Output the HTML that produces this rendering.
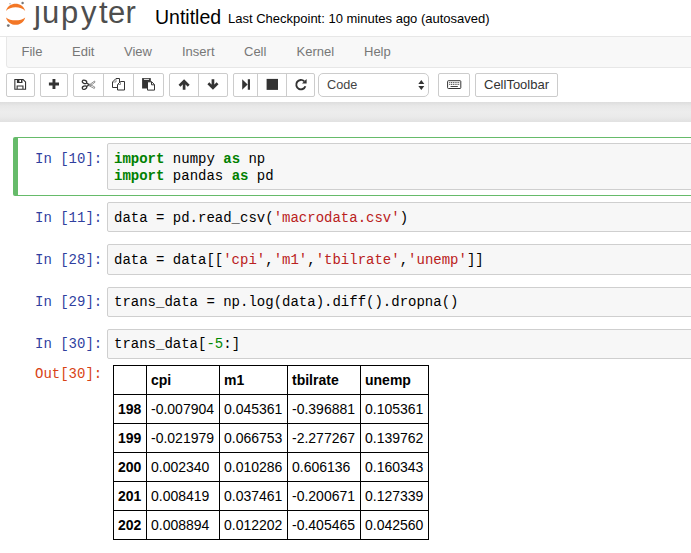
<!DOCTYPE html>
<html><head><meta charset="utf-8">
<style>
*{box-sizing:border-box}
html,body{margin:0;padding:0}
body{width:691px;height:553px;overflow:hidden;background:#fff;font-family:"Liberation Sans",sans-serif;position:relative;color:#000}
.abs{position:absolute}
svg{position:absolute;overflow:visible}
#logo{left:0;top:0}
#title{left:155px;top:6px;font-size:19.5px;line-height:22px;white-space:nowrap}
#chk{left:228px;top:11px;font-size:13px;line-height:16px;white-space:nowrap}
#menubar{left:6px;top:36px;width:700px;height:32px;background:#f8f8f8;border:1px solid #e7e7e7;border-radius:0 0 3px 3px}
#hline{left:0;top:36px;width:691px;height:1px;background:#e7e7e7}
.mi{position:absolute;top:44px;font-size:13px;line-height:16px;color:#777}
.btn{position:absolute;top:73px;height:24px;background:#fff;border:1px solid #ccc;border-radius:2px}
.sep{position:absolute;top:74px;height:22px;width:1px;background:#ccc}
.bt{position:absolute;font-size:13px;line-height:16px;top:77px;color:#333;white-space:nowrap}
#band{left:0;top:102px;width:691px;height:20px;background:linear-gradient(#dddddd 0%,#e8e8e8 20%,#ededed 50%,#eaeaea 75%,#e1e1e1 100%)}
.cellsel{left:13px;top:137px;width:700px;height:59px;border:1px solid #66bb6a;border-left:5px solid #66bb6a;border-radius:2px}
.inp{position:absolute;left:107px;width:600px;background:#f7f7f7;border:1px solid #cfcfcf;border-radius:2px}
.prompt{position:absolute;left:35px;font-family:"Liberation Mono",monospace;font-size:14px;line-height:17px;color:#303F9F;white-space:pre}
.code{position:absolute;left:114px;font-family:"Liberation Mono",monospace;font-size:14px;line-height:17px;white-space:pre;color:#000}
.k{color:#008000;font-weight:bold}
.s{color:#BA2121}
.n{color:#080}
table{position:absolute;left:113px;top:365px;border-collapse:collapse;font-size:14px;color:#000}
td,th{border:1px solid #000;padding:0 4px;height:29px;text-align:left;white-space:nowrap}
th{font-weight:bold}
</style></head><body>
<svg id="logo" width="140" height="34" viewBox="0 0 140 34">
<path d="M6,10.9 C8.5,1.4 22.7,1.4 25.2,10.9 C21,6.2 10.2,6.2 6,10.9Z" fill="#F37726"/>
<path d="M6,17.4 C8.5,27.2 22.7,27.2 25.2,17.4 C21,21.3 10.2,21.3 6,17.4Z" fill="#F37726"/>
<circle cx="22.6" cy="3" r="1.2" fill="#767677"/>
<circle cx="8.3" cy="25.6" r="1.4" fill="#767677"/>
<circle cx="10" cy="3.8" r="0.7" fill="#9e9e9e"/>
<text x="34.1 42 60.9 81.1 98.9 107.9 125.6" y="22.7" font-family="Liberation Sans, sans-serif" font-size="31" fill="#4e4e4e">jupyter</text>
<rect x="35" y="0" width="6" height="5" fill="#fff"/>
</svg>
<div id="title" class="abs">Untitled</div>
<div id="chk" class="abs">Last Checkpoint: 10 minutes ago (autosaved)</div>
<div id="menubar" class="abs"></div><div id="hline" class="abs"></div>
<div class="mi" style="left:21.5px">File</div>
<div class="mi" style="left:72px">Edit</div>
<div class="mi" style="left:124px">View</div>
<div class="mi" style="left:182px">Insert</div>
<div class="mi" style="left:244px">Cell</div>
<div class="mi" style="left:296.5px">Kernel</div>
<div class="mi" style="left:364px">Help</div>

<div class="btn" style="left:6px;width:29px"></div>
<div class="btn" style="left:40px;width:28px"></div>
<div class="btn" style="left:73px;width:91px"></div>
<div class="sep" style="left:103px"></div><div class="sep" style="left:133px"></div>
<div class="btn" style="left:169px;width:59px"></div>
<div class="sep" style="left:198px"></div>
<div class="btn" style="left:233px;width:82px"></div>
<div class="sep" style="left:257px"></div><div class="sep" style="left:286px"></div>
<div class="btn" style="left:318px;width:111px;border-radius:5px"></div>
<div class="bt" style="left:327px;font-size:12.7px;color:#444">Code</div>
<div class="btn" style="left:438px;width:32px"></div>
<div class="btn" style="left:475px;width:83px"></div>
<div class="bt" style="left:484px">CellToolbar</div>

<svg id="icons" width="691" height="110" viewBox="0 0 691 110" style="left:0;top:0">
<g fill="#333" stroke="none">
<!-- save -->
<path d="M14.3,79 h9 l2.8,2.8 v8 h-11.8z M15.4,80.1 v8.6 h1.2 v-3.3 h6.9 v3.3 h1.5 v-6.4 l-2.2,-2.2 h-0.3 v3 h-5.6 v-3z M17.7,86.5 v2.2 h4.7 v-2.2z M19.4,80.1 v2 h1.6 v-2z" fill-rule="evenodd"/>
<!-- plus -->
<path d="M52.5,79 h2.9 v3.6 h3.6 v2.9 h-3.6 v3.6 h-2.9 v-3.6 h-3.6 v-2.9 h3.6z"/>
<!-- arrows -->
<path d="M179.5,85.7 L184.1,81.1 L188.7,85.7 M184.1,81.5 V89.8" fill="none" stroke="#333" stroke-width="2.7" stroke-linejoin="miter"/>
<path d="M208.35,83.3 L212.95,87.9 L217.55,83.3 M212.95,87.5 V79.2" fill="none" stroke="#333" stroke-width="2.7" stroke-linejoin="miter"/>
<!-- step forward -->
<path d="M242.2,79.3 l5.4,5.2 l-5.4,5.2z M247.8,79.3 h2.2 v10.5 h-2.2z"/>
<!-- stop -->
<rect x="266.6" y="78.9" width="11.4" height="11"/>
</g>
<!-- scissors -->
<g fill="none" stroke="#333" stroke-width="1.2">
<ellipse cx="84.5" cy="81.9" rx="2.3" ry="1.6" transform="rotate(22 84.5 81.9)"/>
<ellipse cx="84.5" cy="87.6" rx="2.3" ry="1.6" transform="rotate(-22 84.5 87.6)"/>
<path d="M86.6,83 L89.5,84.9 M86.6,86.5 L89.5,84.6" stroke-width="1.3"/>
<path d="M88.6,85.4 L94.6,81 L95,82.2 L90,86 M89,84 L94.8,87 L94.3,88.5 L88.8,85.6" stroke="#777" stroke-width="0.8"/>
</g>
<!-- copy -->
<g fill="#fff" stroke="#333" stroke-width="1">
<path d="M112.5,82 L116,78.5 H119.5 V87.5 H112.5Z"/><path d="M112.8,82 H116 V78.8" fill="none" stroke="#777" stroke-width="0.8"/>
<path d="M117.5,84.5 L120.5,81.5 H124.5 V90 H117.5Z"/><path d="M117.8,84.5 H120.5 V81.8" fill="none" stroke="#777" stroke-width="0.8"/>
</g>
<!-- paste -->
<path d="M142.1,78.1 h8.7 v10.4 h-8.7z" fill="#333"/>
<rect x="143.9" y="78.9" width="5.2" height="0.9" fill="#fff"/>
<path d="M147.5,81.8 h4.2 l2.8,2.8 v5.5 h-7z" fill="#fff" stroke="#333" stroke-width="1"/>
<path d="M151.5,81.8 v3 h3" fill="none" stroke="#333" stroke-width="1"/>
<!-- repeat -->
<path d="M304.2,81.2 A4.7,4.7 0 1 0 305.4,86.2" fill="none" stroke="#333" stroke-width="1.9"/>
<path d="M306.6,78.9 v4.6 h-4.6z" fill="#333"/>
<!-- select arrows -->
<path d="M418.3,83.9 l3,-4 l3,4z M418.3,86 l3,4 l3,-4z" fill="#333"/>
<!-- keyboard -->
<rect x="447.6" y="80.7" width="13.2" height="7.8" rx="0.8" fill="none" stroke="#333" stroke-width="1"/>
<path d="M449.2,82.6 h10 M449.2,84.4 h10" stroke="#333" stroke-width="0.9" stroke-dasharray="1.1 0.7" fill="none"/>
<path d="M450.6,86.5 h7.2" stroke="#333" stroke-width="0.9" fill="none"/>
</svg>

<div id="band" class="abs"></div>
<div class="cellsel abs"></div>

<div class="inp" style="top:143px;height:47px"></div>
<div class="prompt" style="top:151px">In [10]:</div>
<div class="code" style="top:151px"><span class="k">import</span> numpy <span class="k">as</span> np
<span class="k">import</span> pandas <span class="k">as</span> pd</div>

<div class="inp" style="top:202px;height:30px"></div>
<div class="prompt" style="top:210px">In [11]:</div>
<div class="code" style="top:210px">data = pd.read_csv(<span class="s">'macrodata.csv'</span>)</div>

<div class="inp" style="top:244px;height:31px"></div>
<div class="prompt" style="top:252px">In [28]:</div>
<div class="code" style="top:252px">data = data[[<span class="s">'cpi'</span>,<span class="s">'m1'</span>,<span class="s">'tbilrate'</span>,<span class="s">'unemp'</span>]]</div>

<div class="inp" style="top:287px;height:30px"></div>
<div class="prompt" style="top:294px">In [29]:</div>
<div class="code" style="top:294px">trans_data = np.log(data).diff().dropna()</div>

<div class="inp" style="top:329px;height:30px"></div>
<div class="prompt" style="top:336px">In [30]:</div>
<div class="code" style="top:336px">trans_data[<span class="n">-5</span>:]</div>

<div class="prompt" style="top:366px;color:#D84315">Out[30]:</div>
<table>
<tr><th style="width:33px"></th><th style="width:73px">cpi</th><th style="width:68px">m1</th><th style="width:73px">tbilrate</th><th style="width:68px">unemp</th></tr>
<tr><th>198</th><td>-0.007904</td><td>0.045361</td><td>-0.396881</td><td>0.105361</td></tr>
<tr><th>199</th><td>-0.021979</td><td>0.066753</td><td>-2.277267</td><td>0.139762</td></tr>
<tr><th>200</th><td>0.002340</td><td>0.010286</td><td>0.606136</td><td>0.160343</td></tr>
<tr><th>201</th><td>0.008419</td><td>0.037461</td><td>-0.200671</td><td>0.127339</td></tr>
<tr><th>202</th><td>0.008894</td><td>0.012202</td><td>-0.405465</td><td>0.042560</td></tr>
</table>
</body></html>
